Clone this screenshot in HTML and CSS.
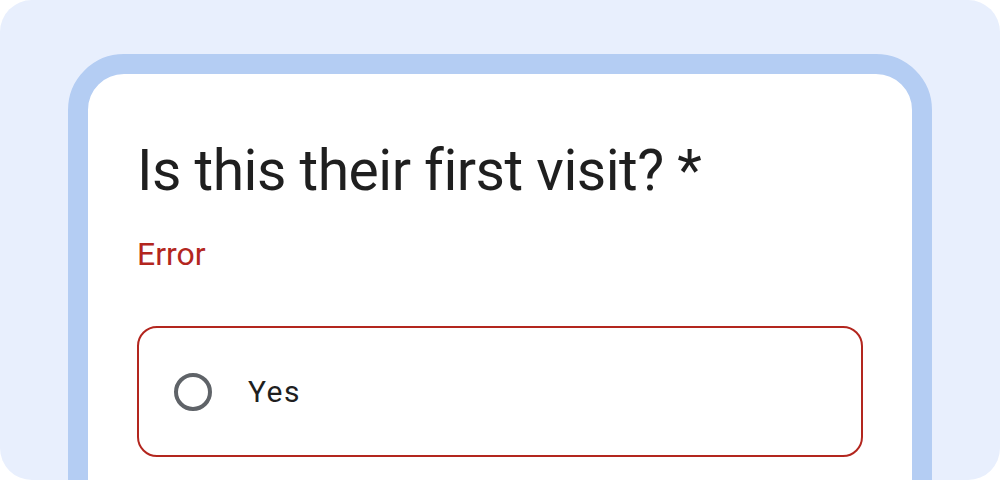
FILE: index.html
```html
<!DOCTYPE html>
<html>
<head>
<meta charset="utf-8">
<link rel="stylesheet" href="styles.css">
</head>
<body>
<div class="stage">
  <div class="card">
    <h1 class="title">Is this their first visit? *</h1>
    <div class="error">Error</div>
    <div class="option">
      <span class="radio"></span>
      <span class="label">Yes</span>
    </div>
  </div>
</div>
</body>
</html>
```

FILE: styles.css
```css
html, body {
  margin: 0;
  padding: 0;
  background: #ffffff;
}
.stage {
  width: 1000px;
  height: 480px;
  box-sizing: border-box;
  background: #e8effd;
  border-radius: 32px;
  padding: 54px 68px 0 68px;
  overflow: hidden;
  font-family: Roboto, "Noto Sans", sans-serif;
}
.card {
  background: #ffffff;
  border: 20px solid #b4cdf3;
  border-radius: 56px;
  padding: 65px 49px 0 49px;
  height: 600px;
}
.title {
  margin: 0;
  font-weight: 400;
  font-size: 57px;
  line-height: 64px;
  letter-spacing: -0.5px;
  color: #1f1f1f;
}
.error {
  margin-top: 31px;
  font-size: 32px;
  line-height: 40px;
  color: #b3261e;
}
.option {
  margin-top: 52px;
  height: 131px;
  box-sizing: border-box;
  border: 2px solid #b3261e;
  border-radius: 20px;
  display: flex;
  align-items: center;
  padding-left: 35px;
  gap: 36px;
}
.radio {
  width: 38px;
  height: 38px;
  box-sizing: border-box;
  border: 4px solid #5f6368;
  border-radius: 50%;
  flex: none;
}
.label {
  font-size: 30px;
  line-height: 36px;
  letter-spacing: 1.5px;
  color: #1f1f1f;
}
```
